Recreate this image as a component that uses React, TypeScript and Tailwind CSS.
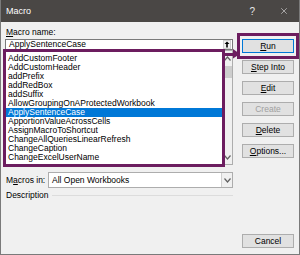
import { X } from "lucide-react";

const macros = [
  "AddCustomFooter",
  "AddCustomHeader",
  "addPrefix",
  "addRedBox",
  "addSuffix",
  "AllowGroupingOnAProtectedWorkbook",
  "ApplySentenceCase",
  "ApportionValueAcrossCells",
  "AssignMacroToShortcut",
  "ChangeAllQueriesLinearRefresh",
  "ChangeCaption",
  "ChangeExcelUserName",
];

const selected = "ApplySentenceCase";

function Chevron({ up }: { up?: boolean }) {
  return (
    <svg width="7" height="5" viewBox="0 0 7 5" className="block">
      <path
        d={up ? "M0.5 4.5 L3.5 1 L6.5 4.5" : "M0.5 0.5 L3.5 4 L6.5 0.5"}
        fill="none"
        stroke="#606060"
        strokeWidth="1.2"
      />
    </svg>
  );
}

function DlgButton({
  children,
  disabled,
  focused,
  className = "",
}: {
  children: React.ReactNode;
  disabled?: boolean;
  focused?: boolean;
  className?: string;
}) {
  return (
    <div
      className={`h-[14px] flex items-center justify-center bg-[#e1e1e1] border ${
        focused ? "border-[#0078d7]" : "border-[#adadad]"
      } ${disabled ? "text-[#a0a0a0]" : "text-black"} ${className}`}
    >
      {children}
    </div>
  );
}

export default function App() {
  return (
    <div className="relative w-[300px] h-[255px] overflow-hidden bg-[#f0f0f0] border-x border-b border-[#7a7a7a] font-['Liberation_Sans',sans-serif] text-[8.5px] leading-[9px] text-black">
      {/* title bar */}
      <div className="h-[22px] bg-[#4a4745] flex items-center pl-[5px] pr-[10px] text-white">
        <span className="text-[9px]">Macro</span>
        <span className="ml-auto mr-[24px] text-[10px] text-[#e8e8e8]">?</span>
        <X className="w-[10px] h-[10px] text-[#e8e8e8]" strokeWidth={1.4} />
      </div>

      <div className="flex pl-[4px]">
        {/* left column */}
        <div className="w-[228px] flex flex-col">
          <div className="mt-[5px] h-[10px] flex items-center pl-[1px]">
            <span>
              <span className="underline">M</span>acro name:
            </span>
          </div>
          <div className="mt-[2px] h-[11px] bg-white border border-[#7a7a7a] flex items-center pl-[3px] relative">
            <span>ApplySentenceCase</span>
            <div className="absolute right-[1px] top-[0px] w-[8px] h-[9px] bg-[#f0f0f0] border border-[#cfcfcf] flex items-center justify-center">
              <svg width="6" height="7" viewBox="0 0 6 7">
                <path d="M3 0.5 L0.5 3 H2.2 V6.5 H3.8 V3 H5.5 Z" fill="#000" />
              </svg>
            </div>
          </div>
          {/* list box */}
          <div className="h-[115px] bg-white border border-[#adadad] flex">
            <div className="flex-1 pt-[3px] flex flex-col">
              {macros.map((m) => (
                <div
                  key={m}
                  className={`h-[9px] flex items-center pl-[2px] whitespace-nowrap ${
                    m === selected ? "bg-[#0078d7] text-white" : ""
                  }`}
                >
                  {m}
                </div>
              ))}
            </div>
            <div className="w-[9px] bg-[#f0f0f0] flex flex-col items-center">
              <div className="mt-[5px]">
                <Chevron up />
              </div>
              <div className="mt-[5px] w-[8px] h-[12px] bg-[#cdcdcd]" />
              <div className="mt-auto mb-[4px]">
                <Chevron />
              </div>
            </div>
          </div>
          {/* macros in */}
          <div className="mt-[7px] flex items-center">
            <span className="pl-[1px] w-[43px]">
              M<span className="underline">a</span>cros in:
            </span>
            <div className="flex-1 h-[16px] bg-white border border-[#adadad] flex items-center pl-[3px]">
              <span>All Open Workbooks</span>
              <div className="ml-auto w-[11px] h-full bg-[#f0f0f0] border-l border-[#cfcfcf] flex items-center justify-center">
                <Chevron />
              </div>
            </div>
          </div>
          <div className="mt-[2px] h-[10px] flex items-center gap-[3px] pl-[1px]">
            <span>Description</span>
            <div className="flex-1 h-px bg-[#dcdcdc]" />
          </div>
        </div>

        {/* right column */}
        <div className="ml-[9px] w-[52px] flex flex-col">
          <DlgButton focused className="mt-[17px]">
            <span>
              <span className="underline">R</span>un
            </span>
          </DlgButton>
          <DlgButton className="mt-[7px]">
            <span>
              <span className="underline">S</span>tep Into
            </span>
          </DlgButton>
          <DlgButton className="mt-[7px]">
            <span>
              <span className="underline">E</span>dit
            </span>
          </DlgButton>
          <DlgButton disabled className="mt-[7px]">
            Create
          </DlgButton>
          <DlgButton className="mt-[7px]">
            <span>
              <span className="underline">D</span>elete
            </span>
          </DlgButton>
          <DlgButton className="mt-[7px]">
            <span>
              <span className="underline">O</span>ptions...
            </span>
          </DlgButton>
          <DlgButton className="mt-[76px]">Cancel</DlgButton>
        </div>
      </div>

      {/* annotation overlays */}
      <div className="absolute left-[2px] top-[49px] w-[222px] h-[118px] border-[3px] border-[#6c1d5f]" />
      <div className="absolute left-[236px] top-[33px] w-[62px] h-[26px] border-[3px] border-[#6c1d5f]" />
      <svg
        className="absolute left-[223px] top-[47px]"
        width="17"
        height="12"
        viewBox="0 0 17 12"
      >
        <path d="M0 7.5 H10" stroke="#6c1d5f" strokeWidth="3" />
        <path d="M9 2 L16 7 L9 11.5 Z" fill="#6c1d5f" />
      </svg>
    </div>
  );
}
